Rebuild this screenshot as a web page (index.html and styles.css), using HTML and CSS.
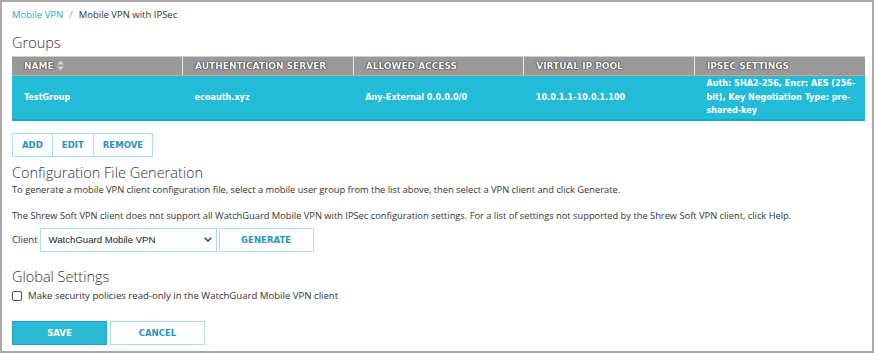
FILE: index.html
```html
<!DOCTYPE html>
<html lang="en">
<head>
  <meta charset="UTF-8">
  <title>Mobile VPN with IPSec</title>
  <link rel="stylesheet" href="styles.css">
</head>
<body>
  <div class="frame">
    <div class="breadcrumb">
      <a href="#">Mobile VPN</a><span class="sep">/</span><span>Mobile VPN with IPSec</span>
    </div>

    <h2>Groups</h2>

    <table class="groups">
      <thead>
        <tr>
          <th>NAME <svg class="sort" width="7" height="9" viewBox="0 0 7 9"><path d="M3.5 0L7 3.5H0z M3.5 9L0 5.5h7z" fill="#d8d8d8"/></svg></th>
          <th>AUTHENTICATION SERVER</th>
          <th>ALLOWED ACCESS</th>
          <th>VIRTUAL IP POOL</th>
          <th>IPSEC SETTINGS</th>
        </tr>
      </thead>
      <tbody>
        <tr class="selected">
          <td>TestGroup</td>
          <td>ecoauth.xyz</td>
          <td>Any-External 0.0.0.0/0</td>
          <td>10.0.1.1-10.0.1.100</td>
          <td>Auth: SHA2-256, Encr: AES (256-bit), Key Negotiation Type: pre-shared-key</td>
        </tr>
      </tbody>
    </table>

    <div class="btn-group">
      <button class="btn">ADD</button>
      <button class="btn">EDIT</button>
      <button class="btn">REMOVE</button>
    </div>

    <h2 class="section">Configuration File Generation</h2>
    <p>To generate a mobile VPN client configuration file, select a mobile user group from the list above, then select a VPN client and click Generate.</p>
    <p class="note">The Shrew Soft VPN client does not support all WatchGuard Mobile VPN with IPSec configuration settings. For a list of settings not supported by the Shrew Soft VPN client, click Help.</p>

    <div class="client-row">
      <label for="client">Client</label>
      <div class="select" id="client">
        <span>WatchGuard Mobile VPN</span>
        <svg width="8" height="5" viewBox="0 0 8 5"><path d="M0.7 0.7l3.3 3.3 3.3-3.3" fill="none" stroke="#333" stroke-width="1.3"/></svg>
      </div>
      <button class="btn wide">GENERATE</button>
    </div>

    <h2 class="section global">Global Settings</h2>
    <label class="check">
      <span class="box"></span>
      Make security policies read-only in the WatchGuard Mobile VPN client
    </label>

    <div class="actions">
      <button class="btn wide primary">SAVE</button>
      <button class="btn wide">CANCEL</button>
    </div>
  </div>
</body>
</html>
```

FILE: styles.css
```css
* {
  box-sizing: border-box;
}

body {
  margin: 0;
  font-family: 'Open Sans', sans-serif;
  font-size: 9.3px;
  color: #333;
  background: #fff;
}

.frame {
  width: 874px;
  height: 353px;
  border: 2px solid #a9a9a9;
  padding: 0 8px 0 10px;
  overflow: hidden;
}

.breadcrumb {
  padding-top: 6px;
  font-size: 9.5px;
  line-height: 14px;
}

.breadcrumb a {
  color: #2aa8d6;
  text-decoration: none;
}

.breadcrumb .sep {
  color: #999;
  margin: 0 6px;
}

h2 {
  margin: 11px 0 0;
  font-size: 14.5px;
  font-weight: 300;
  line-height: 20px;
  color: #333;
}

h2.section {
  margin-top: 6px;
}

h2.global {
  margin-top: 15px;
}

.groups {
  width: 853px;
  margin-top: 3px;
  border-collapse: collapse;
  table-layout: fixed;
  font-weight: bold;
}

.groups th {
  height: 19px;
  padding: 0 12px;
  background: #999;
  border-top: 1px solid #cfcfcf;
  border-left: 1px solid #e6e6e6;
  border-bottom: 1px solid #d9a08c;
  color: #fff;
  font-family: 'DejaVu Sans', Verdana, sans-serif;
  font-size: 9px;
  text-align: left;
  text-shadow: 0 0 1px #222, 0 0 1px #222, 0 0 1px #222;
}

.groups th:first-child {
  border-left: none;
}

.groups .sort {
  vertical-align: -1px;
}

.groups td {
  height: 44px;
  padding: 0 4px 0 12px;
  background: #22bcd9;
  border-bottom: 2px solid #16a9c7;
  color: #fff;
  font-family: 'DejaVu Sans Condensed', 'DejaVu Sans', sans-serif;
  font-size: 9px;
  line-height: 13.5px;
}

.btn-group {
  display: flex;
  margin-top: 12px;
}

.btn {
  height: 24px;
  padding: 0 9px;
  background: #fff;
  border: 1px solid #a6e1ee;
  color: #2a94bf;
  font-family: 'DejaVu Sans Condensed', 'DejaVu Sans', sans-serif;
  font-size: 9.5px;
  font-weight: bold;
  cursor: pointer;
}

.btn-group .btn + .btn {
  border-left: none;
}

.btn.wide {
  width: 95px;
}

p {
  margin: 0;
  line-height: 14px;
}

p.note {
  margin-top: 12px;
}

.client-row {
  display: flex;
  align-items: center;
  gap: 2px;
  margin-top: 5px;
}

.client-row label {
  font-size: 9.6px;
}

.select {
  width: 177px;
  height: 24px;
  display: flex;
  align-items: center;
  justify-content: space-between;
  padding: 0 4px 0 8px;
  border: 1px solid #a6e1ee;
  font-family: 'Liberation Sans', Arial, sans-serif;
  font-size: 9.6px;
  color: #222;
}

.check {
  display: flex;
  align-items: center;
  gap: 6px;
  margin-top: 2px;
  line-height: 14px;
  font-size: 9.6px;
}

.check .box {
  width: 10px;
  height: 10px;
  border: 1px solid #555;
  border-radius: 2px;
}

.actions {
  display: flex;
  gap: 3px;
  margin-top: 18px;
}

.btn.primary {
  background: #2bb9d6;
  border-color: #1ea3c1;
  color: #fff;
}
```
